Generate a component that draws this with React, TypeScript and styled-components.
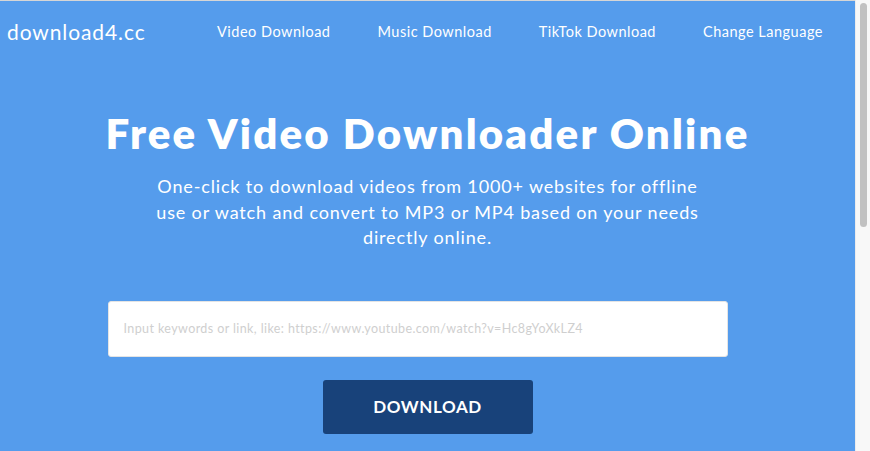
import styled, { createGlobalStyle } from 'styled-components';

const GlobalStyle = createGlobalStyle`
    html, body {
        margin: 0;
        padding: 0;
        overflow: hidden;
    }
    body {
        font-family: Lato, "Open Sans", sans-serif;
        background: #f8f8f8;
    }
`

const navLinks = ['Video Download', 'Music Download', 'TikTok Download', 'Change Language'];

export default function App() {
    return (
        <>
            <GlobalStyle/>
            <Window>
                <Page>
                    <Header>
                        <Logo>download4.cc</Logo>
                        <Nav>
                            {navLinks.map(link => (
                                <NavLink key={link}>{link}</NavLink>
                            ))}
                        </Nav>
                    </Header>
                    <Hero>
                        <Title>Free Video Downloader Online</Title>
                        <Subtitle>
                            One-click to download videos from 1000+ websites for offline use or watch and convert to
                            MP3 or MP4 based on your needs directly online.
                        </Subtitle>
                        <SearchInput
                            placeholder="Input keywords or link, like: https://www.youtube.com/watch?v=Hc8gYoXkLZ4"/>
                        <DownloadButton>DOWNLOAD</DownloadButton>
                    </Hero>
                </Page>
                <ScrollTrack>
                    <ScrollThumb/>
                </ScrollTrack>
            </Window>
        </>
    );
}

const Window = styled.div`
    display: flex;
    height: 100vh;
    overflow: hidden;
`

const Page = styled.main`
    flex: 1;
    background: #559cec;
    color: #fff;
    border-top: 1px solid #d6d6d6;
`

const ScrollTrack = styled.div`
    width: 13px;
    flex-shrink: 0;
    display: flex;
    justify-content: center;
    padding: 3px 0 0 1px;
    background: #f8f8f8;
    border-left: 1px solid #ececec;
`

const ScrollThumb = styled.div`
    width: 7px;
    height: 224px;
    border-radius: 4px;
    background: #c1c1c1;
`

const Header = styled.header`
    display: flex;
    align-items: center;
    justify-content: space-between;
    height: 61px;
    padding: 0 32px 0 7px;
`

const Logo = styled.a`
    font-size: 21px;
    letter-spacing: 0.9px;
    color: #fff;
`

const Nav = styled.nav`
    display: flex;
    gap: 47px;
`

const NavLink = styled.a`
    font-size: 14.5px;
    color: #fff;
    letter-spacing: 0.5px;
`

const Hero = styled.section`
    display: flex;
    flex-direction: column;
    align-items: center;
    padding-top: 46px;
`

const Title = styled.h1`
    margin: 0;
    font-size: 42px;
    font-weight: 800;
    letter-spacing: 2.2px;
    line-height: 50px;
`

const Subtitle = styled.p`
    margin: 16px 0 0;
    width: 560px;
    text-align: center;
    font-size: 18px;
    letter-spacing: 0.85px;
    line-height: 25.5px;
`

const SearchInput = styled.input`
    margin: 50px 20px 0 0;
    width: 620px;
    height: 56px;
    box-sizing: border-box;
    padding: 0 15px;
    border: 1px solid #e4e4e4;
    border-radius: 3px;
    font-family: inherit;
    font-size: 12.5px;
    letter-spacing: 0.4px;
    outline: none;
    &::placeholder {
        color: #cfcfcf;
    }
`

const DownloadButton = styled.button`
    margin-top: 23px;
    width: 210px;
    height: 54px;
    border: none;
    border-radius: 3px;
    background: #18427a;
    color: #fff;
    font-family: inherit;
    font-size: 17px;
    font-weight: 700;
    letter-spacing: 0.6px;
`
